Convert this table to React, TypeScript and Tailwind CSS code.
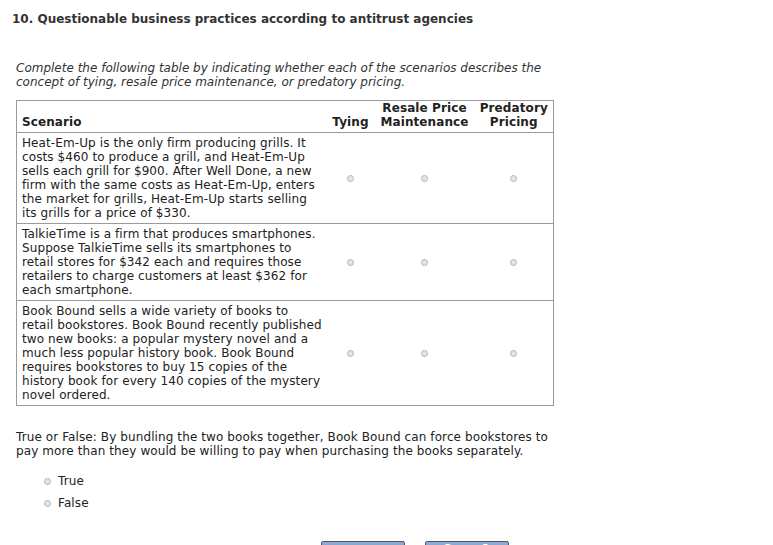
import React from 'react';

// line breaks follow the original rendering
const rows = [
  [
    'Heat-Em-Up is the only firm producing grills. It',
    'costs $460 to produce a grill, and Heat-Em-Up',
    'sells each grill for $900. After Well Done, a new',
    'firm with the same costs as Heat-Em-Up, enters',
    'the market for grills, Heat-Em-Up starts selling',
    'its grills for a price of $330.',
  ],
  [
    'TalkieTime is a firm that produces smartphones.',
    'Suppose TalkieTime sells its smartphones to',
    'retail stores for $342 each and requires those',
    'retailers to charge customers at least $362 for',
    'each smartphone.',
  ],
  [
    'Book Bound sells a wide variety of books to',
    'retail bookstores. Book Bound recently published',
    'two new books: a popular mystery novel and a',
    'much less popular history book. Book Bound',
    'requires bookstores to buy 15 copies of the',
    'history book for every 140 copies of the mystery',
    'novel ordered.',
  ],
];

function Radio() {
  return <span className="inline-block w-[7px] h-[7px] rounded-full border border-[#b5b5b5] bg-[#e4e4e4]" />;
}

export default function App() {
  return (
    <div className="w-[773px] h-[545px] overflow-hidden bg-white text-[#222] text-[12px] leading-[14px] tracking-[0.1px] font-['DejaVu_Sans','Liberation_Sans',sans-serif]">
      <h1 className="pl-[12px] pt-[11px] text-[12px] leading-[16px] font-bold text-[#333] tracking-normal">
        10. Questionable business practices according to antitrust agencies
      </h1>

      <div className="pl-[16px] pt-[34px]">
        <p className="italic text-[#333] w-[540px] tracking-normal">
          Complete the following table by indicating whether each of the scenarios describes the concept of tying, resale price maintenance, or predatory pricing.
        </p>

        <table className="mt-[11px] w-[538px] table-fixed border-collapse border border-[#9a9a9a]">
          <thead>
            <tr className="font-bold">
              <th className="w-[310px] text-left align-bottom px-[5px] pt-[2px] pb-[3px]">Scenario</th>
              <th className="w-[48px] text-center align-bottom pb-[3px]">Tying</th>
              <th className="w-[100px] text-center align-bottom pb-[3px]">
                Resale Price
                <br />
                Maintenance
              </th>
              <th className="text-center align-bottom pb-[3px]">
                Predatory
                <br />
                Pricing
              </th>
            </tr>
          </thead>
          <tbody>
            {rows.map((lines, i) => (
              <tr key={i} className="border-t border-[#9a9a9a]">
                <td className="pl-[5px] pr-0 pt-[3px] pb-[3px] align-top whitespace-nowrap">
                  {lines.map((l, j) => (
                    <div key={j}>{l}</div>
                  ))}
                </td>
                <td className="text-center align-middle"><Radio /></td>
                <td className="text-center align-middle"><Radio /></td>
                <td className="text-center align-middle"><Radio /></td>
              </tr>
            ))}
          </tbody>
        </table>

        <p className="mt-[24px] w-[540px] text-[#222]">
          True or False: By bundling the two books together, Book Bound can force bookstores to pay more than they would be willing to pay when purchasing the books separately.
        </p>

        <div className="mt-[16px] pl-[28px] flex flex-col gap-[8px]">
          <label className="flex items-center gap-[7px]"><Radio />True</label>
          <label className="flex items-center gap-[7px]"><Radio />False</label>
        </div>

        <div className="mt-[31px] pl-[305px] flex items-start gap-[20px]">
          <button className="w-[84px] min-h-[22px] px-0 pt-[1px] border border-[#555] rounded-[2px] bg-gradient-to-b from-[#8eaed6] to-[#5b82b8] text-white font-bold text-[12px] leading-[13px] whitespace-nowrap tracking-normal">Grade It Now</button>
          <button className="w-[84px] min-h-[22px] px-0 pt-[1px] border border-[#555] rounded-[2px] bg-gradient-to-b from-[#8eaed6] to-[#5b82b8] text-white font-bold text-[12px] leading-[13px] tracking-normal">Save &amp; Continue</button>
        </div>
      </div>
    </div>
  );
}
